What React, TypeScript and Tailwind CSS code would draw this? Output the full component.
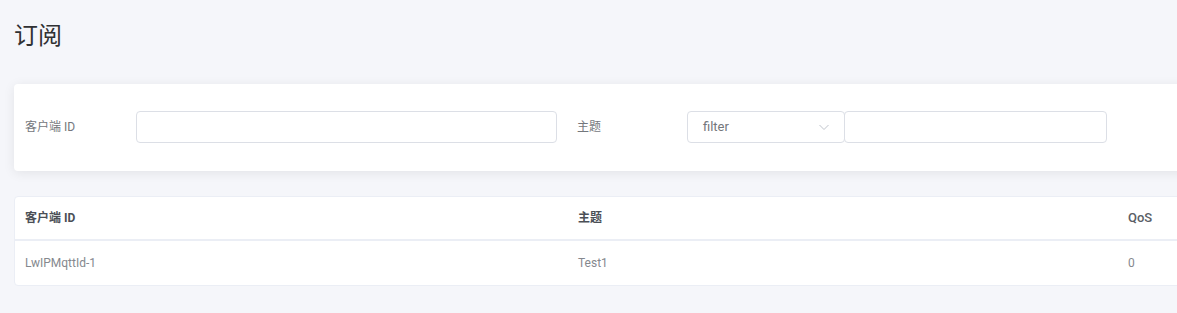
import React from "react";

export default function App() {
  const font = { fontFamily: "Roboto, 'Noto Sans CJK SC', sans-serif" };
  return (
    <div className="w-[1177px] h-[313px] overflow-hidden bg-[#f5f6fa]" style={font}>
      <div className="w-[1260px] pl-[14px]">
        <h1 className="h-[72px] pt-[19px] text-[24px] leading-[34px] text-[#303133] font-normal">订阅</h1>
        <div className="mt-[12px] bg-white rounded-[4px] shadow-[0_2px_12px_0_rgba(0,0,0,0.08)] px-[11px] pt-[27px] pb-[28px] flex gap-[20px]">
          <div className="w-[532px] flex items-center">
            <label className="w-[111px] text-[12px] text-[#74777c]">客户端 ID</label>
            <div className="flex-1 h-[32px] border border-[#dcdfe6] rounded-[4px] bg-white" />
          </div>
          <div className="w-[532px] flex items-center">
            <label className="w-[110px] text-[12px] text-[#74777c]">主题</label>
            <div className="w-[158px] h-[32px] -mt-[1px] border border-[#dcdfe6] rounded-[4px] bg-white flex items-center justify-between pl-[15px] pr-[14px]">
              <span className="text-[13px] text-[#74777c]">filter</span>
              <svg width="12" height="12" viewBox="0 0 12 12" fill="none">
                <path d="M1.5 4 L6 8.5 L10.5 4" stroke="#c0c4cc" strokeWidth="1" />
              </svg>
            </div>
            <div className="w-[263px] h-[32px] border border-[#dcdfe6] rounded-[4px] bg-white -ml-[1px]" />
          </div>
        </div>
        <div className="mt-[25px] bg-white rounded-[4px] border border-[#ebeef5] text-[12px]">
          <div className="flex h-[44px] items-center border-b-2 border-[#ebeef5] font-bold text-[#4b4f56]">
            <div className="w-[552px] pl-[10px]">客户端 ID</div>
            <div className="w-[551px] pl-[11px]">主题</div>
            <div className="flex-1 pl-[10px] font-medium text-[13px] text-[#5a5e65]">QoS</div>
          </div>
          <div className="flex h-[44px] items-center text-[#85888e]">
            <div className="w-[552px] pl-[10px]">LwIPMqttId-1</div>
            <div className="w-[551px] pl-[11px]">Test1</div>
            <div className="flex-1 pl-[10px]">0</div>
          </div>
        </div>
      </div>
    </div>
  );
}
